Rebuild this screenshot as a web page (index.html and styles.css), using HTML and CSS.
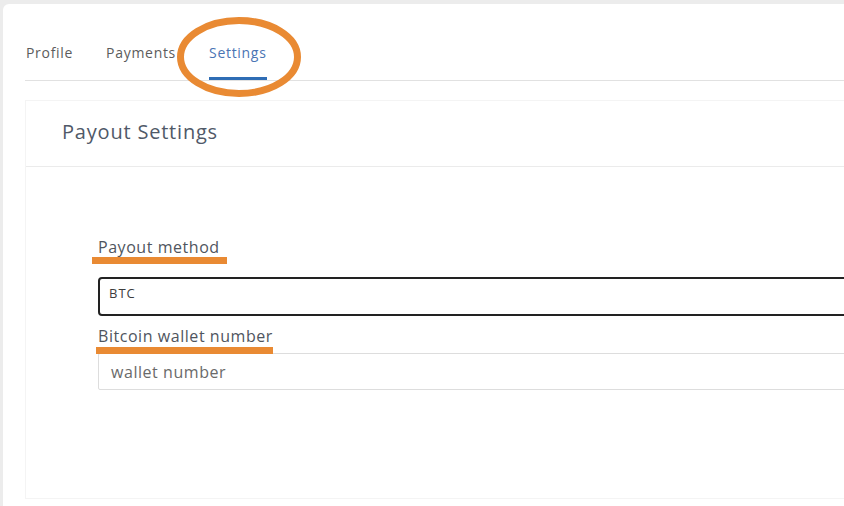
FILE: index.html
```html
<!DOCTYPE html>
<html lang="en">
<head>
<meta charset="utf-8">
<title>Payout Settings</title>
<link rel="stylesheet" href="styles.css">
</head>
<body>
<div class="panel">
  <nav class="tabs">
    <a class="tab">Profile</a>
    <a class="tab">Payments</a>
    <a class="tab active">Settings</a>
  </nav>
  <section class="card">
    <header class="card-header">Payout Settings</header>
    <div class="card-body">
      <label class="field-label">Payout method</label>
      <div class="select">BTC</div>
      <label class="field-label second">Bitcoin wallet number</label>
      <div class="input">wallet number</div>
    </div>
  </section>
</div>
<svg class="marks" width="844" height="506" viewBox="0 0 844 506">
  <ellipse cx="239" cy="57" rx="58.5" ry="36.5" fill="none" stroke="#e98a33" stroke-width="7"/>
  <rect x="92" y="257" width="135" height="7" fill="#e98a33"/>
  <rect x="96" y="347" width="177" height="7" fill="#e98a33"/>
</svg>
</body>
</html>
```
FILE: styles.css
```css
html, body {
  margin: 0;
  padding: 0;
  overflow: hidden;
}
body {
  background: #ececec;
  width: 844px;
  height: 506px;
  position: relative;
  font-family: "Open Sans", "DejaVu Sans", sans-serif;
}
.panel {
  margin: 4px 0 0 3px;
  background: #ffffff;
  border-top-left-radius: 6px;
  padding: 39px 0 0 22px;
  height: 502px;
  box-sizing: border-box;
  width: 841px;
  overflow: hidden;
}
.tabs {
  display: flex;
  gap: 33px;
  border-bottom: 1px solid #e1e1e1;
  padding-left: 1px;
  width: 1000px;
}
.tab {
  font-size: 14px;
  line-height: 20px;
  letter-spacing: 0.7px;
  color: #5c5c5c;
  padding-bottom: 14px;
  border-bottom: 3px solid transparent;
}
.tab.active {
  color: #4a74b4;
  border-bottom-color: #2f6db5;
}
.card {
  margin-top: 19px;
  border: 1px solid #f4f4f4;
  width: 1000px;
}
.card-header {
  font-size: 20px;
  line-height: 26px;
  letter-spacing: 0.8px;
  color: #505968;
  padding: 18px 0 21px 36px;
  border-bottom: 1px solid #ebebeb;
}
.card-body {
  padding: 69px 0 108px 72px;
  display: flex;
  flex-direction: column;
  align-items: flex-start;
}
.field-label {
  font-size: 16px;
  line-height: 22px;
  letter-spacing: 0.55px;
  color: #4f555e;
  margin-bottom: 19px;
}
.field-label.second {
  margin-top: 9px;
  margin-bottom: 6px;
}
.select {
  box-sizing: border-box;
  width: 900px;
  height: 39px;
  border: 2px solid #222222;
  border-radius: 4px;
  padding: 5px 9px 0;
  font-size: 13px;
  line-height: 18px;
  letter-spacing: 1px;
  color: #3d3d3d;
}
.input {
  box-sizing: border-box;
  width: 900px;
  height: 37px;
  border: 1px solid #dddddd;
  border-radius: 2px;
  padding: 7px 12px 0;
  font-size: 16px;
  line-height: 22px;
  letter-spacing: 0.55px;
  color: #6a6a6a;
}
.marks {
  position: absolute;
  left: 0;
  top: 0;
  pointer-events: none;
}
```
